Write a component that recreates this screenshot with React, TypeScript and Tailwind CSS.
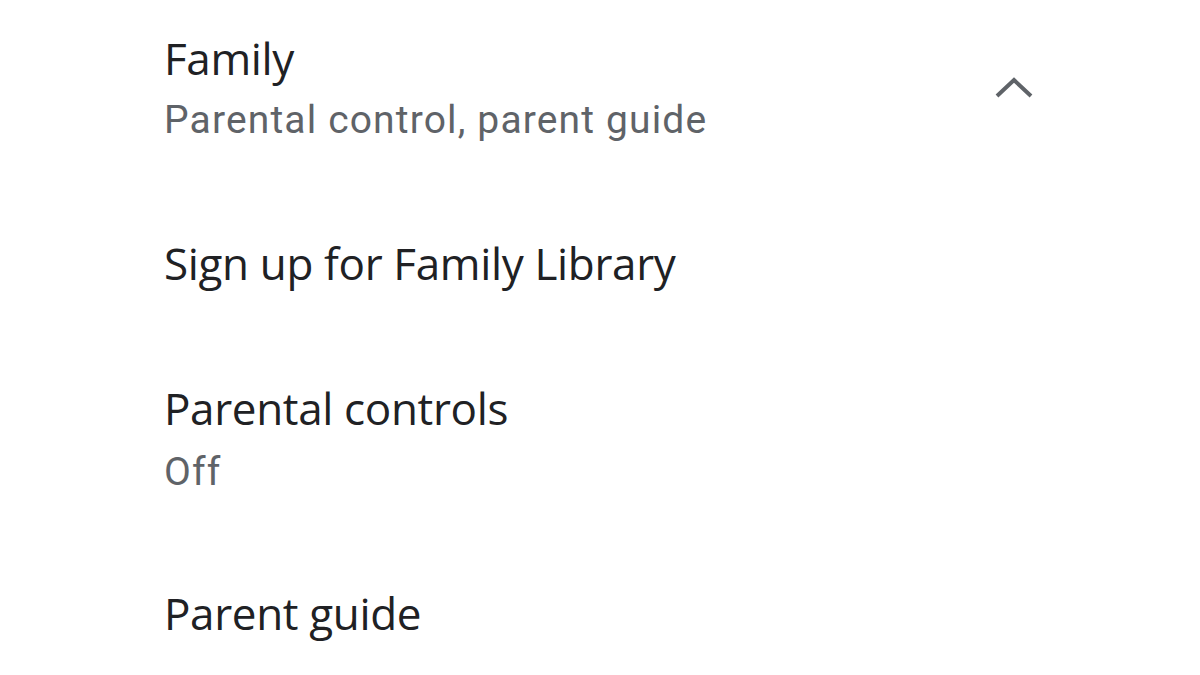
import React from "react";

const title = "text-[44px] leading-[52px] text-[#202124] tracking-[-0.35px]";
const sub = "text-[39px] leading-[46px] text-[#5f6368] tracking-[1.15px]";
const titleFont = { fontFamily: '"Open Sans", "Liberation Sans", sans-serif' } as const;

export default function App() {
  return (
    <div className="w-[1200px] h-[675px] bg-white overflow-hidden" style={{ fontFamily: 'Roboto, "Liberation Sans", sans-serif' }}>
      <div className="flex flex-col pl-[164px] pr-[166px]">
        <div className="flex items-start justify-between pt-[32px]">
          <div className="flex flex-col">
            <div className={title} style={titleFont}>Family</div>
            <div className={`${sub} mt-[13px]`}>Parental control, parent guide</div>
          </div>
          <svg width="40" height="24" viewBox="0 0 40 24" className="mt-[43px]">
            <path d="M3 21 L20 5 L37 21" fill="none" stroke="#5f6368" strokeWidth="4" />
          </svg>
        </div>
        <div className={`${title} mt-[94px]`} style={titleFont}>Sign up for Family Library</div>
        <div className={`${title} mt-[93px]`} style={titleFont}>Parental controls</div>
        <div className={`${sub} mt-[15px]`}>Off</div>
        <div className={`${title} mt-[92px]`} style={titleFont}>Parent guide</div>
      </div>
    </div>
  );
}
